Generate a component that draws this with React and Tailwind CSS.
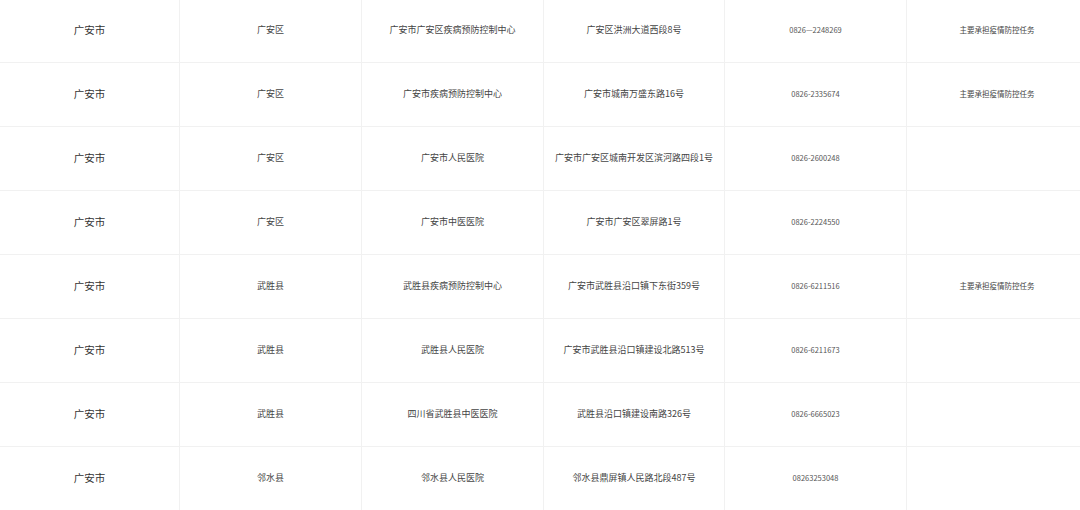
const rows = [
  ['广安市', '广安区', '广安市广安区疾病预防控制中心', '广安区洪洲大道西段8号', '0826—2248269', '主要承担疫情防控任务'],
  ['广安市', '广安区', '广安市疾病预防控制中心', '广安市城南万盛东路16号', '0826-2335674', '主要承担疫情防控任务'],
  ['广安市', '广安区', '广安市人民医院', '广安市广安区城南开发区滨河路四段1号', '0826-2600248', ''],
  ['广安市', '广安区', '广安市中医医院', '广安市广安区翠屏路1号', '0826-2224550', ''],
  ['广安市', '武胜县', '武胜县疾病预防控制中心', '广安市武胜县沿口镇下东街359号', '0826-6211516', '主要承担疫情防控任务'],
  ['广安市', '武胜县', '武胜县人民医院', '广安市武胜县沿口镇建设北路513号', '0826-6211673', ''],
  ['广安市', '武胜县', '四川省武胜县中医医院', '武胜县沿口镇建设南路326号', '0826-6665023', ''],
  ['广安市', '邻水县', '邻水县人民医院', '邻水县鼎屏镇人民路北段487号', '08263253048', ''],
]

const cellText = [
  'text-[10.5px] text-[#333]',
  'text-[9px] text-[#444]',
  'text-[9px] text-[#444]',
  'text-[9px] text-[#444]',
  'text-[7.5px] text-[#555]',
  'text-[7.5px] text-[#444]',
]

export default function App() {
  return (
    <div
      className="w-[1080px] h-[510px] overflow-hidden bg-white"
      style={{ fontFamily: '"Noto Sans CJK SC", "Noto Sans", sans-serif' }}
    >
      <div className="-mt-[1.5px] w-[1090px]">
        {rows.map((row, i) => (
          <div
            key={i}
            className="grid grid-cols-[180px_182px_182px_181px_182px_180px] h-[64px] border-b border-[#f1f1f1]"
          >
            {row.map((cell, j) => (
              <div
                key={j}
                className={`flex items-center justify-center text-center ${
                  j < 5 ? 'border-r border-[#f1f1f1]' : ''
                } ${cellText[j]}`}
              >
                {cell}
              </div>
            ))}
          </div>
        ))}
      </div>
    </div>
  )
}
